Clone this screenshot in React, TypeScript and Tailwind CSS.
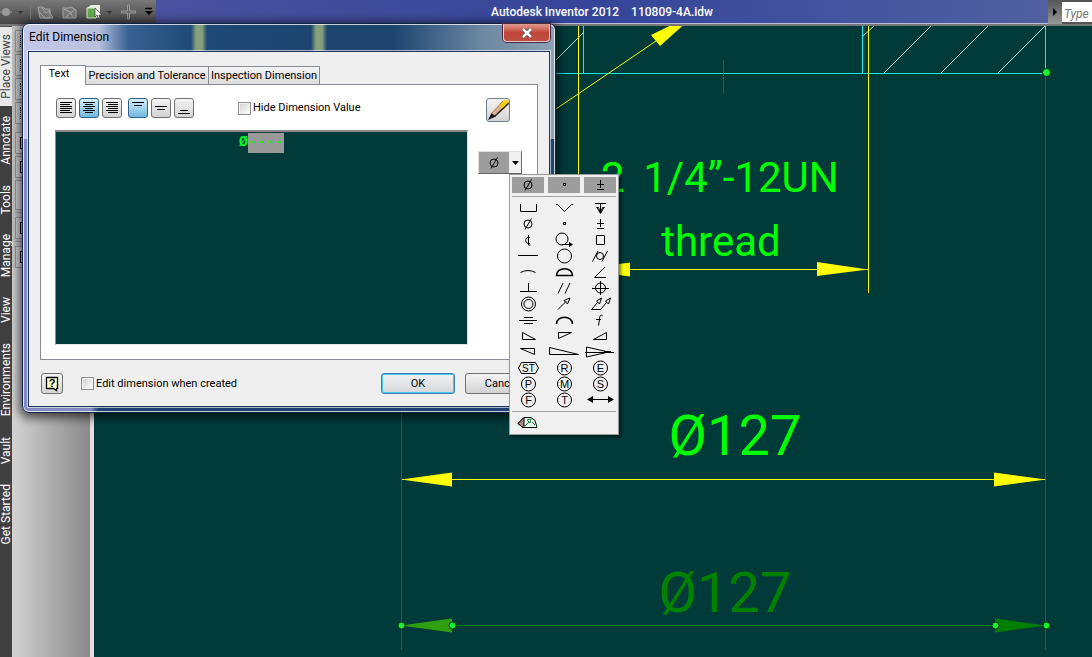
import { useEffect, useRef } from 'react';
import type { ReactNode } from 'react';

const ribbonTabs = ['Annotate', 'Tools', 'Manage', 'View', 'Environments', 'Vault', 'Get Started'];

const letter = (char: string) => (
    <>
        <circle cx="16.5" cy="8" r="7" />
        <text x="16.5" y="12" textAnchor="middle" fontSize="11" fill="black" stroke="none">{char}</text>
    </>
);

const diameter = (
    <>
        <circle cx="16" cy="8" r="4" />
        <path d="M13 13.5 19.5 2.5" />
    </>
);
const degree = <path d="M15.5 6.5h2v2h-2z" />;
const plusMinus = <path d="M16.5 3v8M13 7.5h7M13 12.5h7" />;

// Three columns, read row by row
const symbols: { name: string; art: ReactNode }[] = [
    { name: 'Counterbore', art: <path d="M8.5 4v7.5h16V4" /> },
    { name: 'Countersink', art: <path d="M8 4.5h1.5l7 7 7-7H25" /> },
    { name: 'Depth', art: <path d="M11 3.5h11M16.5 3.5v9M12.5 7.5h2l2 5.500 2-5.500h2M13 7.500l3.500 6 3.500-6" /> },
    { name: 'Diameter', art: diameter },
    { name: 'Degree', art: degree },
    { name: 'Plus minus', art: plusMinus },
    { name: 'Centerline', art: <path d="M18 5.5c-5-2-6 6-1 6h1M16.5 3v10h2" /> },
    { name: 'All around', art: <><circle cx="14" cy="7" r="6" /><path d="M14 12.5h10" /><path d="M21 10v5l4-2.500z" fill="black" stroke="none" /></> },
    { name: 'Square', art: <path d="M12.500 3.500h8v9h-8z" /> },
    { name: 'Straightness', art: <path d="M6 7.5h20" /> },
    { name: 'Circularity', art: <circle cx="16.5" cy="8" r="7" /> },
    { name: 'Cylindricity', art: <><circle cx="16" cy="8" r="3.5" /><path d="M8.5 13.500 14 3M18 13.500 23.500 3" /></> },
    { name: 'Line profile', art: <path d="M8.500 8.500q7.500-4 15 0" /> },
    { name: 'Surface profile', art: <path d="M8.500 11.500c0-9 16-9 16 0z" strokeWidth="1.600" /> },
    { name: 'Angularity', art: <path d="M21 3 10.500 13.500H22" /> },
    { name: 'Perpendicularity', art: <path d="M8 11.500h17M16.500 3v8.500" /> },
    { name: 'Parallelism', art: <path d="M10 13.500 15 3M17 13.500 22 3" /> },
    { name: 'Position', art: <><circle cx="16.500" cy="8" r="5" /><path d="M8 8.500h17M16.500 1v14" /></> },
    { name: 'Concentricity', art: <><circle cx="16.500" cy="8" r="7" /><circle cx="16.500" cy="8" r="4.500" /></> },
    { name: 'Circular runout', art: <path d="M10 13.500 18.500 5M22 2l-6 2.500 3.500 3.500z" /> },
    { name: 'Total runout', art: <path d="M7.500 13.500 14 6M17.500 2l-5 3 3 3zM7.500 13.500h9L23 6M26.500 2l-5 3 3 3z" /> },
    { name: 'Symmetry', art: <path d="M12 5.500h9M7 8.500h18M12 11.500h9" /> },
    { name: 'Arc length', art: <path d="M8.500 12c0-9 16-9 16 0" strokeWidth="1.600" /> },
    { name: 'Function', art: <path d="M18.500 3.500c-3-1-3 2-3 4l-1 6M12 7.500h5" /> },
    { name: 'Taper left', art: <path d="M10.500 4.500v7h13z" /> },
    { name: 'Slope down', art: <path d="M10.500 4.500h13l-13 6z" /> },
    { name: 'Slope right', art: <path d="M22.500 4.500v7h-13z" /> },
    { name: 'Slope left', art: <path d="M8.500 4.500h14v6z" /> },
    { name: 'Flat slope', art: <path d="M1.500 3.500v7h29z" /> },
    { name: 'Conical taper', art: <path d="M2.500 3v10l22-5-22-5M1 8.500h29M20 7.500h7" /> },
    {
        name: 'Statistical',
        art: (
            <>
                <path d="M9.500 2.500h14l3 5.500-3 5.500h-14l-3-5.500z" />
                <text x="16.5" y="12" textAnchor="middle" fontSize="10" fill="black" stroke="none">ST</text>
            </>
        ),
    },
    { name: 'Regardless of feature size', art: letter('R') },
    { name: 'Envelope', art: letter('E') },
    { name: 'Projected tolerance zone', art: letter('P') },
    { name: 'Maximum material', art: letter('M') },
    { name: 'Least material', art: letter('S') },
    { name: 'Free state', art: letter('F') },
    { name: 'Tangent plane', art: letter('T') },
    { name: 'Between', art: <><path d="M5 7.500h23" /><path d="M3 7.500 9 4v7zM30 7.500 24 4v7z" fill="black" stroke="none" /></> },
];

function Glyph({ children }: { children: ReactNode }) {
    return (
        <svg
            className="h-4 w-8 shrink-0"
            viewBox="0 0 32 16"
            fill="none"
            stroke="black"
            fontFamily="'Liberation Sans', sans-serif"
        >
            {children}
        </svg>
    );
}

function QuickAccess() {
    return (
        <div className="flex h-full w-[156px] shrink-0 bg-linear-to-b from-[#787878] to-[#464646]">
            <svg className="h-6 w-full" viewBox="0 0 156 24" fill="none">
                <path d="M0 12h12" stroke="#999" />
                <circle cx="6" cy="12" r="4" fill="#999" />
                <path d="M18 11h5l-2.500 3zM107 11h5l-2.500 3z" fill="#333" />
                <path d="M30.500 5v14" stroke="#777" />
                <g stroke="#a8a8a8">
                    <path d="M38 7h5l2 2h5v9H40z" fill="#777" />
                    <path d="M42 8l4 5 3-2 4 7h-9M39 12l5 5" />
                    <path d="M63 8h5l3-1 5 3v8H63z" fill="#777" />
                    <path d="M64 9l6 3 3 5M66 17l8-7" />
                </g>
                <path d="M87 8l4-3h9v10l-3 3z" fill="#e8f2e4" />
                <path d="M87 8h9v10h-9z" fill="#63a84c" stroke="#dcebd6" />
                <path d="M95 8v9l2-2 2 4 1-1-1-3h3z" fill="white" stroke="#333" strokeWidth=".7" />
                <path d="M127.500 5h2v6h6v2h-6v6h-2v-6h-6v-2h6z" stroke="#999" fill="#666" />
                <path d="M145 8.500h7" stroke="black" strokeWidth="1.500" />
                <path d="M145 11h8l-4 4z" fill="black" />
            </svg>
        </div>
    );
}

function TitleBar() {
    return (
        <header className="flex h-[26px] shrink-0 items-stretch border-b-2 border-[#777] bg-[#4c5a9a]">
            <QuickAccess />
            <div className="flex min-w-0 flex-1 items-center justify-center gap-3 border-b border-[#b5bfdf] bg-linear-to-r from-[#4a519d] via-[#35459a] to-[#5160a0] text-[12px] font-medium whitespace-nowrap text-white">
                <span className="truncate">Autodesk Inventor 2012</span>
                <span>110809-4A.idw</span>
            </div>
            <div className="flex w-11 shrink-0 bg-[#555]">
                <button type="button" aria-label="Expand search" className="flex w-3.5 shrink-0 items-center justify-center bg-linear-to-b from-[#555] to-[#999]">
                    <svg className="h-2 w-1" viewBox="0 0 4 8"><path d="M0 0v8l4-4z" /></svg>
                </button>
                <input
                    aria-label="Search"
                    placeholder="Type a keyword"
                    className="my-0.5 min-w-0 flex-1 bg-white pt-1 pl-0.5 text-[12px] italic outline-none placeholder:text-[#777]"
                />
            </div>
        </header>
    );
}

function RibbonTabs() {
    return (
        <nav className="flex w-3 shrink-0 flex-col bg-[#404040] text-[12px] leading-3 whitespace-nowrap text-white">
            <button type="button" className="flex h-20 items-center justify-center border-t border-[#555] bg-[#e9e9e9] text-[#444]">
                <span className="rotate-180 [writing-mode:vertical-rl]">Place Views</span>
            </button>
            {ribbonTabs.map((tab) => (
                <button key={tab} type="button" className="flex items-center justify-center py-2.5">
                    <span className="rotate-180 [writing-mode:vertical-rl]">{tab}</span>
                </button>
            ))}
        </nav>
    );
}

function ToolPanel() {
    const block = 'h-[22px] border border-[#999] bg-[#d2d2d2] pl-1 pt-1';
    return (
        <aside className="w-[78px] shrink-0 bg-linear-to-r from-[#d2d2d2] to-[#8a8a8a]">
            <div className="flex w-3 flex-col gap-0.5 bg-[#c4c4c4] pt-1 pl-[3px]">
                {[0, 1, 2, 3].map((n) => (
                    <div key={n} className={block}><div className="h-3 border border-dotted border-black" /></div>
                ))}
                <div className="mt-1.5 flex flex-col gap-0.5">
                    {[0, 1].map((n) => (
                        <div key={n} className={block}><div className="h-3 border border-r-0 border-black" /></div>
                    ))}
                    <div className="h-[30px] border border-[#999] bg-[#d2d2d2]" />
                </div>
                {[0, 1].map((n) => (
                    <div key={n} className="border-t border-[#999] pt-1">
                        <div className={block}><div className="h-3 border border-r-0 border-black" /></div>
                    </div>
                ))}
            </div>
        </aside>
    );
}

function Drawing() {
    return (
        <svg
            className="absolute inset-0 size-full"
            viewBox="94 26 998 631"
            preserveAspectRatio="xMinYMin meet"
            fill="none"
            fontFamily="Roboto, sans-serif"
        >
            {/* Part outline and hatching */}
            <g stroke="#20e8e8" shapeRendering="crispEdges">
                <path d="M555 73.500H1046M583.500 26v47M862.500 26v47M1045.500 26v47" />
            </g>
            <path d="M556 60 584 32M863 36l11-10M884 73l47-47M941 73l47-47M998 73l47-47" stroke="#b8e6d8" />
            <path d="M723.500 60v34" stroke="#d01010" shapeRendering="crispEdges" />

            {/* Thread callout */}
            <g stroke="yellow">
                <path d="M578.500 26v244M868.500 26v267M578 269.500h290" shapeRendering="crispEdges" />
                <path d="M556 109 656 41" />
            </g>
            <path d="M651 35 660 46 698 12zM868 269.500 817 262v14zM578 269.500l52-7v14z" fill="yellow" />
            <g fill="#00ff00" fontSize="42" textAnchor="middle">
                <text x="723" y="192"><tspan x="618">2 </tspan><tspan x="741">1/4”-12UN</tspan></text>
                <text x="721" y="256">thread</text>
            </g>

            {/* Current dimension */}
            <path d="M401.500 411v239M1045.500 74v576M401 625.500h645" stroke="#008000" shapeRendering="crispEdges" />
            <path d="M402 479.500h643" stroke="yellow" shapeRendering="crispEdges" />
            <path d="M401 479.500l51-7v14zM1046 479.500l-52-7v14z" fill="yellow" />
            <text x="735" y="455" textAnchor="middle" fontSize="56" fill="#00ff00">Ø127</text>

            {/* Dimension being dragged */}
            <text x="725" y="612" textAnchor="middle" fontSize="56" fill="#008200">Ø127</text>
            <path d="M401 625.500l51-7v14z" fill="#2f9f10" />
            <path d="M1046 625.500l-51-7v14z" fill="#008000" />
            <g fill="#18f030" stroke="#003010">
                <circle cx="1046.500" cy="72.500" r="4" />
                <circle cx="401.500" cy="625.500" r="3.500" />
                <circle cx="452.500" cy="625.500" r="3.500" />
                <circle cx="995.500" cy="625.500" r="3.500" />
                <circle cx="1046.500" cy="625.500" r="3.500" />
            </g>
        </svg>
    );
}

function ToolButton({ label, lines, active = false }: { label: string; lines: string; active?: boolean }) {
    return (
        <button
            type="button"
            aria-label={label}
            aria-pressed={active}
            className={
                active
                    ? 'size-5 rounded-[3px] border border-[#2c628b] bg-linear-to-b from-[#d8effb] to-[#6eb8e0]'
                    : 'size-5 rounded-[3px] border border-[#707070] bg-linear-to-b from-[#f4f4f4] to-[#d2d2d2]'
            }
        >
            <svg className="size-[18px]" viewBox="0 0 18 18" stroke="black" shapeRendering="crispEdges"><path d={lines} /></svg>
        </button>
    );
}

function SymbolMenu() {
    return (
        <div className="absolute top-[22px] left-[30px] z-20 w-[110px] border border-[#9a9a9a] bg-[#f0f0f0] shadow-[2px_2px_3px_rgba(0,0,0,0.5)]">
            <div className="flex justify-between p-0.5">
                {[diameter, degree, plusMinus].map((art, i) => (
                    <button key={i} type="button" aria-label={['Recent diameter', 'Recent degree', 'Recent plus minus'][i]} className="bg-[#9d9d9d]">
                        <Glyph>{art}</Glyph>
                    </button>
                ))}
            </div>
            <div className="mx-0.5 mt-px mb-[3px] border-t border-[#a0a0a0]" />
            <div className="grid grid-cols-3 gap-x-1 px-0.5">
                {symbols.map((s) => (
                    <button key={s.name} type="button" aria-label={s.name} className="h-4">
                        <Glyph>{s.art}</Glyph>
                    </button>
                ))}
            </div>
            <div className="mx-0.5 mt-[3px] border-t border-[#a0a0a0]" />
            <button type="button" aria-label="Insert symbol" className="mx-0.5 my-[3px] flex h-4">
                <Glyph>
                    <path d="M6 8.500 12 2.500h7l4 3 2 7H11z" fill="#e8f4ea" />
                    <path d="M6 8.500 12 2.500v10h-1z" fill="#a08888" />
                    <path d="M13 11l4-4M19 4l-1 4-3-3zM20 7l3 3" stroke="#108040" />
                </Glyph>
            </button>
        </div>
    );
}

function EditDimension() {
    const textRef = useRef<HTMLTextAreaElement>(null);

    // Select the placeholder that stands for the measured value
    useEffect(() => {
        textRef.current?.focus();
        textRef.current?.setSelectionRange(1, 5);
    }, []);

    return (
        <div
            role="dialog"
            aria-label="Edit Dimension"
            className="absolute top-[23px] left-[22px] z-10 flex w-[534px] flex-col rounded-[7px] border border-[#10244a] bg-[linear-gradient(to_right,#c3c8ea_0,#b8c0de_76px,#396292_105px,#1f4976_168px,#86a07c_173px,#86a07c_179px,#1f4976_184px,#1d4570_288px,#86a07c_293px,#86a07c_299px,#1d4570_304px,#1d4570_370px,#6d88a2_460px,#8ca2b8_100%),linear-gradient(to_right,#8289c4_0,#8289c4_68px,#1e4272_76px,#1e4272_100%)] bg-[size:100%_115px,100%_100%] bg-no-repeat px-[5px] pb-[5px] text-[12px] leading-4 text-black shadow-[0_2px_10px_3px_rgba(0,0,0,0.6),inset_0_0_0_1px_rgba(255,255,255,0.75)]"
        >
            <div className="flex h-[27px] items-start justify-between">
                <h1 className="pt-[3px] pl-px leading-5">Edit Dimension</h1>
                <button type="button" aria-label="Close" className="flex h-[18px] w-[47px] items-center justify-center rounded-b-[4px] border border-t-0 border-[#e8c8c8] bg-linear-to-b from-[#dd9c92] via-[#c4453a] to-[#bb5040] shadow-[0_0_0_1px_#4a2a3a]">
                    <svg className="h-2.5 w-3" viewBox="0 0 12 10">
                        <path d="M2 1l8 8M10 1 2 9" stroke="#444" strokeWidth="4" />
                        <path d="M2 1l8 8M10 1 2 9" stroke="white" strokeWidth="2.500" />
                    </svg>
                </button>
            </div>

            <div className="border border-[#1a3560] bg-[#efefef] px-[11px] pt-[13px] pb-3 text-[11px] shadow-[0_0_0_1px_rgba(255,255,255,0.6)]">
                {/* Tabs */}
                <div role="tablist" className="flex items-end">
                    <button type="button" role="tab" aria-selected="true" className="-mb-px h-5 w-[46px] border border-b-0 border-[#898c95] bg-white pr-2 pb-1 leading-4">Text</button>
                    <button type="button" role="tab" aria-selected="false" className="h-[18px] w-[123px] border border-b-0 border-l-0 border-[#898c95] bg-linear-to-b from-[#f4f4f4] to-[#dcdcdc] leading-4 whitespace-nowrap">Precision and Tolerance</button>
                    <button type="button" role="tab" aria-selected="false" className="h-[18px] w-[111px] border border-b-0 border-l-0 border-[#898c95] bg-linear-to-b from-[#f4f4f4] to-[#dcdcdc] leading-4 whitespace-nowrap">Inspection Dimension</button>
                </div>

                <div role="tabpanel" className="flex justify-between border border-[#898c95] bg-white pt-[13px] pr-[15px] pb-3.5 pl-3.5">
                    <div className="w-[413px]">
                        <div className="flex h-5 items-center">
                            <div className="flex gap-[3px] pl-px">
                                <ToolButton label="Align left" lines="M3 3.500h12M3 5.500h10M3 7.500h12M3 9.500h12M3 11.500h10M3 13.500h12" />
                                <ToolButton label="Align center" active lines="M3 3.500h12M5 5.500h8M3 7.500h12M5 9.500h8M3 11.500h12M5 13.500h8" />
                                <ToolButton label="Align right" lines="M3 3.500h12M5 5.500h10M3 7.500h12M5 9.500h10M3 11.500h12M5 13.500h10" />
                            </div>
                            <div className="flex gap-[3px] pl-1.5">
                                <ToolButton label="Top" active lines="M3 3.500h12M5 6.500h8" />
                                <ToolButton label="Middle" lines="M3 7.500h12M5 10.500h8" />
                                <ToolButton label="Bottom" lines="M5 11.500h8M3 14.500h12" />
                            </div>
                            <label className="flex items-center gap-0.5 pl-11 whitespace-nowrap">
                                <input type="checkbox" className="size-[13px] appearance-none border border-[#8e8f8f] bg-linear-to-br from-[#cfcfcf] to-white shadow-[inset_0_0_0_1px_#f4f4f4]" />
                                Hide Dimension Value
                            </label>
                        </div>
                        <textarea
                            ref={textRef}
                            aria-label="Dimension text"
                            defaultValue="Ø----"
                            spellCheck={false}
                            className="mt-3 block h-[215px] w-full resize-none border border-t-2 border-[#e3e3e3] border-t-[#8a8a8a] border-l-[#8a8a8a] bg-[#003b3a] pt-px text-center font-['Liberation_Mono',monospace] text-[15px] leading-5 font-bold text-[#00ff20] outline-none selection:bg-[#999] selection:text-[#20e830]"
                        />
                    </div>

                    <div className="flex flex-col items-end gap-[29px]">
                        <button type="button" aria-label="Edit symbol" className="mr-3 size-6 rounded-[3px] border border-[#6f7f90] bg-linear-to-b from-[#f4f4f4] to-[#d4d4d4]">
                            <svg className="size-[22px]" viewBox="0 0 22 22">
                                <path d="M5 14 15 3 19 8 9 17z" fill="#e0b088" />
                                <path d="M12 6 17 1q5-1 5 3L16 11z" fill="#f8d010" />
                                <path d="M8 17 22 4" stroke="#222" strokeWidth="1.500" />
                                <path d="M5 14 16 2" stroke="#906040" strokeWidth=".7" />
                                <path d="M1 21 4.500 14 9 17.500z" fill="#181818" />
                            </svg>
                        </button>
                        <div className="relative flex h-[23px] w-11 border border-t-[#ddd] border-r-[#666] border-b-[#666] border-l-[#ddd]">
                            <button type="button" aria-label="Insert diameter" className="flex w-[30px] items-center justify-center overflow-hidden bg-[#9d9d9d]"><Glyph>{diameter}</Glyph></button>
                            <button type="button" aria-label="More symbols" aria-expanded="true" className="flex flex-1 items-center justify-center bg-[#f0f0f0]">
                                <svg className="h-1 w-[7px]" viewBox="0 0 7 4"><path d="M0 0h7L3.500 4z" /></svg>
                            </button>
                            <SymbolMenu />
                        </div>
                    </div>
                </div>

                <div className="flex items-center pt-[13px]">
                    <button type="button" aria-label="Help" className="ml-px flex h-[21px] w-[22px] items-center justify-center rounded-[3px] border border-[#707070] bg-linear-to-b from-[#f6f6f6] to-[#d6d6d6]">
                        <svg className="size-4" viewBox="0 0 16 16">
                            <path d="M2.500 1.500h11v11h-1v2l-3-2h-7z" fill="#ffffc8" stroke="black" strokeWidth="1.300" />
                            <text x="8" y="11" textAnchor="middle" fontSize="11" fontWeight="700" fontFamily="'Liberation Sans', sans-serif">?</text>
                        </svg>
                    </button>
                    <label className="flex flex-1 items-center gap-0.5 pl-[18px] whitespace-nowrap">
                        <input type="checkbox" className="size-[13px] appearance-none border border-[#8e8f8f] bg-linear-to-br from-[#cfcfcf] to-white shadow-[inset_0_0_0_1px_#f4f4f4]" />
                        Edit dimension when created
                    </label>
                    <button type="button" className="h-[21px] w-[74px] rounded-[3px] border border-[#3c7fb1] bg-linear-to-b from-[#f2f2f2] to-[#d4d8da] shadow-[inset_0_0_0_1px_#48c8f0]">OK</button>
                    <button type="button" className="ml-2.5 h-[21px] w-[73px] rounded-[3px] border border-[#707070] bg-linear-to-b from-[#f4f4f4] to-[#d2d2d2]">Cancel</button>
                </div>
            </div>
        </div>
    );
}

export default function App() {
    return (
        <div className="relative flex min-h-screen flex-col overflow-hidden bg-[#404040] font-['Roboto','Noto_Sans',sans-serif]">
            <TitleBar />
            <div className="flex flex-1">
                <RibbonTabs />
                <ToolPanel />
                <main className="relative min-h-[600px] flex-1 border-l-4 border-[#e6dcdc] bg-[#003b3a]">
                    <Drawing />
                </main>
            </div>
            <EditDimension />
        </div>
    );
}
